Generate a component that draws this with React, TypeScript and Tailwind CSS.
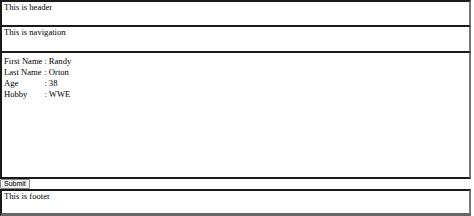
import React from "react";

export default function App() {
  const rows: [string, string][] = [
    ["First Name", "Randy"],
    ["Last Name", "Orton"],
    ["Age", "38"],
    ["Hobby", "WWE"],
  ];
  return (
    <div className="w-[474px] h-[216px] bg-white text-black font-['Liberation_Serif',serif] text-[8.6px] leading-[11px] flex flex-col overflow-hidden">
      <div className="w-[471px] h-[27px] border-2 border-[#1a1a1a] border-r-[#777] pl-[2px]">This is header</div>
      <div className="w-[471px] h-[26px] border-2 border-t-0 border-[#1a1a1a] border-r-[#777] pl-[2px]">This is navigation</div>
      <div className="w-[471px] h-[126px] border-2 border-t-0 border-[#1a1a1a] border-r-[#777] pl-[2px] pt-[3px]">
        <div className="grid grid-cols-[auto_auto_1fr] w-fit">
          {rows.map(([k, v]) => (
            <React.Fragment key={k}>
              <span className="whitespace-nowrap">{k}</span>
              <span className="pl-[2px]">:</span>
              <span className="pl-[2px] whitespace-nowrap">{v}</span>
            </React.Fragment>
          ))}
        </div>
      </div>
      <div className="h-[10px] flex">
        <button className="h-[10px] px-[3px] bg-[#efefef] border border-[#888] rounded-[1px] font-['Liberation_Sans',sans-serif] text-[7px] leading-[8px] text-black">Submit</button>
      </div>
      <div className="w-[471px] flex-1 border-2 border-[#1a1a1a] border-r-[#777] border-b-[3px] border-b-[#666] pl-[2px]">This is footer</div>
    </div>
  );
}
